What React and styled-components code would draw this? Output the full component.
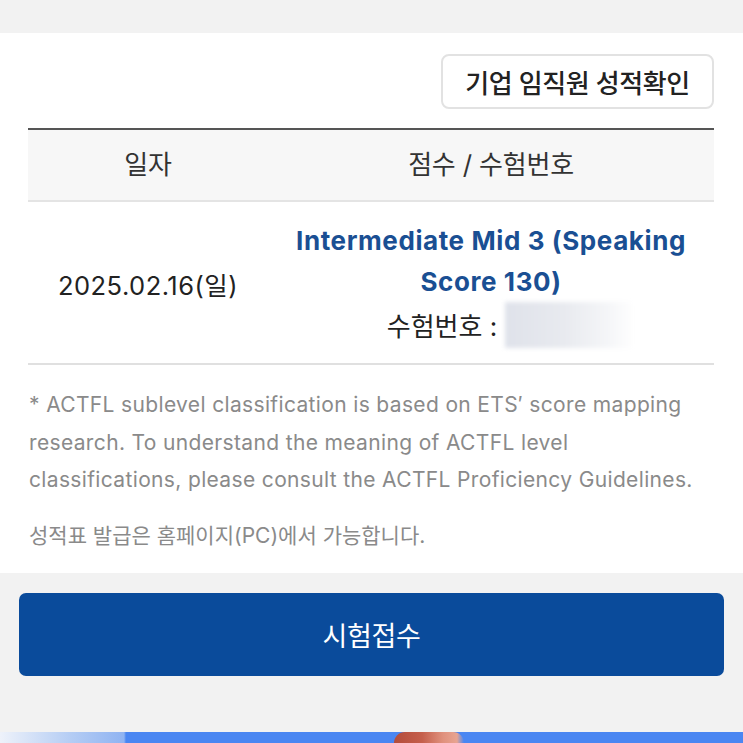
import React from 'react';
import styled, { createGlobalStyle } from 'styled-components';

const GlobalStyle = createGlobalStyle`
  html, body {
    margin: 0;
    padding: 0;
    background: #f2f2f2;
  }
  body {
    font-family: Inter, "Noto Sans CJK KR", sans-serif;
    color: #222;
  }
`;

const Page = styled.div`
  width: 743px;
  height: 743px;
  overflow: hidden;
  display: flex;
  flex-direction: column;
  background: #f2f2f2;
`;

const TopGap = styled.div`
  height: 33px;
  flex: none;
`;

const Card = styled.section`
  background: #fff;
  padding: 21px 29px 0 28px;
  height: 540px;
  flex: none;
  box-sizing: border-box;
`;

const ActionRow = styled.div`
  display: flex;
  justify-content: flex-end;
`;

const OutlineButton = styled.button`
  height: 55px;
  width: 273px;
  border: 2px solid #e2e2e2;
  border-radius: 8px;
  background: #fff;
  font-family: inherit;
  font-size: 26px;
  font-weight: 500;
  color: #222;
  letter-spacing: -0.4px;
  padding: 0;
`;

const Table = styled.div`
  margin-top: 19px;
  border-top: 2px solid #555;
`;

const Row = styled.div`
  display: grid;
  grid-template-columns: 240px 1fr;
  align-items: center;
  border-bottom: 2px solid ${p => (p.$head ? '#e4e4e4' : '#e0e0e0')};
  background: ${p => (p.$head ? '#f7f7f7' : '#fff')};
  height: ${p => p.$h}px;
`;

const HeadCell = styled.div`
  text-align: center;
  font-size: 26px;
  color: #333;
  letter-spacing: -0.2px;
  padding-bottom: 5px;
`;

const DateCell = styled.div`
  text-align: center;
  font-size: 25.5px;
  color: #222;
  letter-spacing: 0.5px;
  padding-top: 1px;
`;

const ScoreCell = styled.div`
  text-align: center;
  display: flex;
  flex-direction: column;
  align-items: center;
  padding-top: 2px;
`;

const Score = styled.div`
  color: #1a4f93;
  font-weight: 700;
  font-size: 26px;
  line-height: 41px;
  letter-spacing: 0.6px;
`;

const ExamNo = styled.div`
  display: flex;
  align-items: center;
  gap: 8px;
  font-size: 26px;
  color: #222;
  margin-left: 40px;
  letter-spacing: 0;
`;

const Blur = styled.span`
  display: inline-block;
  width: 130px;
  height: 46px;
  background: linear-gradient(90deg, #dfe2ea 0%, #e8eaef 45%, #f5f6f8 80%, #fff 100%);
  filter: blur(2px);
`;

const Note = styled.p`
  margin: 21px 0 0 1px;
  font-size: 21px;
  line-height: 37.5px;
  color: #8a8a8a;
  letter-spacing: 0.35px;
`;

const SubNote = styled.p`
  margin: 20px 0 0 1px;
  font-size: 21px;
  color: #8a8a8a;
  letter-spacing: 0;
`;

const BottomArea = styled.div`
  padding: 20px 19px 0 19px;
  height: 159px;
  flex: none;
  box-sizing: border-box;
`;

const PrimaryButton = styled.button`
  width: 100%;
  height: 83px;
  border: none;
  border-radius: 7px;
  background: #0a4b9b;
  color: #fff;
  font-family: inherit;
  font-size: 27px;
  font-weight: 400;
  letter-spacing: -0.3px;
`;

const Banner = styled.div`
  position: relative;
  flex: 1;
  background: linear-gradient(90deg, #eef2fa 0px, #b5cdf4 70px, #8fb3f2 124px, #4a86f2 126px, #4a86f2 100%);
`;

const BannerShape = styled.span`
  position: absolute;
  left: 394px;
  top: 0;
  width: 70px;
  height: 100%;
  border-radius: 30px 30px 0 0;
  background: linear-gradient(90deg, #b44c3b 0%, #c55f4c 40%, #e0917d 70%, #e8a491 90%, #4a86f2 100%);
`;

export default function App() {
  return (
    <Page>
      <GlobalStyle />
      <TopGap />
      <Card>
        <ActionRow>
          <OutlineButton>기업 임직원 성적확인</OutlineButton>
        </ActionRow>
        <Table>
          <Row $head $h={70}>
            <HeadCell>일자</HeadCell>
            <HeadCell>점수 / 수험번호</HeadCell>
          </Row>
          <Row $h={161}>
            <DateCell>2025.02.16(일)</DateCell>
            <ScoreCell>
              <Score>
                Intermediate Mid 3 (Speaking
                <br />
                Score 130)
              </Score>
              <ExamNo>
                수험번호 : <Blur />
              </ExamNo>
            </ScoreCell>
          </Row>
        </Table>
        <Note>
          * ACTFL sublevel classification is based on ETS′ score mapping research. To understand the meaning of ACTFL level
          classifications, please consult the ACTFL Proficiency Guidelines.
        </Note>
        <SubNote>성적표 발급은 홈페이지(PC)에서 가능합니다.</SubNote>
      </Card>
      <BottomArea>
        <PrimaryButton>시험접수</PrimaryButton>
      </BottomArea>
      <Banner>
        <BannerShape />
      </Banner>
    </Page>
  );
}
